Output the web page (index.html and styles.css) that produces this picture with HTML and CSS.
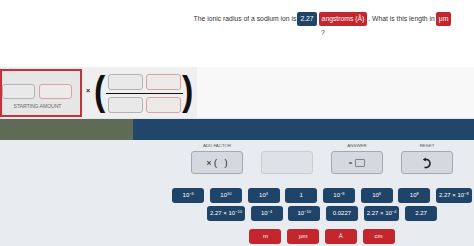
FILE: index.html
```html
<!DOCTYPE html>
<html>
<head>
<meta charset="utf-8">
<link rel="stylesheet" href="styles.css">
</head>
<body>
<div class="question">
  <div class="q-line">The ionic radius of a sodium ion is<span class="badge blue">2.27</span><span class="badge red">angstroms (Å)</span>. What is this length in<span class="badge red">μm</span></div>
  <div class="q-line">?</div>
</div>

<div class="workspace">
  <div class="factors">
    <div class="start">
      <div class="pair">
        <div class="slot num"></div>
        <div class="slot unit"></div>
      </div>
      <div class="start-label">STARTING AMOUNT</div>
    </div>
    <div class="times">×</div>
    <div class="paren open">(</div>
    <div class="fraction">
      <div class="frow">
        <div class="slot num"></div>
        <div class="slot unit"></div>
      </div>
      <div class="fline"></div>
      <div class="frow">
        <div class="slot num"></div>
        <div class="slot unit"></div>
      </div>
    </div>
    <div class="paren close">)</div>
  </div>
  <div class="filler"></div>
</div>

<div class="bar">
  <div class="bar-left"></div>
  <div class="bar-right"></div>
</div>

<div class="panel">
  <div class="controls">
    <div class="actions">
      <div class="action">
        <div class="alabel">ADD FACTOR</div>
        <div class="abtn"><span class="af">× (&nbsp;&nbsp;&nbsp;)</span></div>
      </div>
      <div class="action">
        <div class="alabel"></div>
        <div class="abtn disabled"></div>
      </div>
      <div class="action">
        <div class="alabel">ANSWER</div>
        <div class="abtn"><span class="eq">=</span><span class="ansbox"></span></div>
      </div>
      <div class="action">
        <div class="alabel">RESET</div>
        <div class="abtn">
          <svg class="reset" width="10" height="12" viewBox="0 0 10 12">
            <path d="M3 2.5 H5.2 A3.6 3.6 0 1 1 2.6 10.2" fill="none" stroke="#1a1a1a" stroke-width="1.6"/>
            <path d="M0.8 2.5 L3.8 0.4 L3.8 4.6 Z" fill="#1a1a1a"/>
          </svg>
        </div>
      </div>
    </div>

    <div class="pad">
      <div class="prow">
        <div class="nbtn">10<sup>−6</sup></div>
        <div class="nbtn">10<sup>10</sup></div>
        <div class="nbtn">10<sup>4</sup></div>
        <div class="nbtn">1</div>
        <div class="nbtn">10<sup>−8</sup></div>
        <div class="nbtn">10<sup>6</sup></div>
        <div class="nbtn">10<sup>8</sup></div>
        <div class="nbtn">2.27 × 10<sup>−8</sup></div>
      </div>
      <div class="prow">
        <div class="nbtn">2.27 × 10<sup>−10</sup></div>
        <div class="nbtn">10<sup>−4</sup></div>
        <div class="nbtn">10<sup>−10</sup></div>
        <div class="nbtn">0.0227</div>
        <div class="nbtn">2.27 × 10<sup>−4</sup></div>
        <div class="nbtn">2.27</div>
      </div>
      <div class="prow units">
        <div class="nbtn ubtn">m</div>
        <div class="nbtn ubtn">μm</div>
        <div class="nbtn ubtn">Å</div>
        <div class="nbtn ubtn">cm</div>
      </div>
    </div>
  </div>
</div>
</body>
</html>
```

FILE: styles.css
```css
* { box-sizing: border-box; }
html, body { margin: 0; padding: 0; }
body {
  width: 474px;
  height: 246px;
  overflow: hidden;
  background: #ffffff;
  font-family: "Liberation Sans", Arial, sans-serif;
  color: #333333;
}

.question {
  height: 67px;
  padding-top: 12px;
  padding-left: 172px;
  text-align: center;
  font-size: 6.8px;
}
.q-line {
  line-height: 14px;
  white-space: nowrap;
}
.badge {
  display: inline-block;
  height: 14px;
  line-height: 14px;
  padding: 0 3px;
  margin: 0 1px;
  border-radius: 2px;
  color: #ffffff;
  vertical-align: top;
  font-size: 6.8px;
}
.blue { background: #1f4468; }
.red { background: #c4262d; }

.workspace {
  display: flex;
  height: 51px;
}
.factors {
  width: 197px;
  background: #efefef;
  display: flex;
  align-items: flex-start;
}
.filler {
  flex: 1;
  background: #f8f8f8;
}
.start {
  margin-top: 2px;
  width: 82px;
  height: 48px;
  border: 2px solid #c9303a;
  background: #e6e6e6;
  padding-top: 13px;
  display: flex;
  flex-direction: column;
  align-items: flex-start;
}
.pair {
  width: 71px;
  display: flex;
  gap: 4px;
}
.pair .slot { width: 33px; height: 15px; }
.start-label {
  width: 71px;
  text-align: center;
  margin-top: 4px;
  font-size: 5.2px;
  color: #666666;
  letter-spacing: -0.1px;
}
.slot {
  border-radius: 3px;
}
.slot.num {
  border: 1px solid #b3b3b3;
  background: #e9e9e9;
}
.slot.unit {
  border: 1px solid #d8a3a6;
  background: #eeeaea;
}
.times {
  margin-left: 4px;
  margin-top: 20px;
  font-size: 7px;
  font-weight: bold;
  color: #222222;
  line-height: 8px;
}
.paren {
  font-size: 40px;
  font-weight: bold;
  line-height: 40px;
  margin-top: 4px;
  color: #111111;
  transform: scaleX(0.85);
}
.paren.open { margin-left: 3px; }
.paren.close { margin-left: -2px; }
.fraction {
  margin-top: 7px;
  width: 77px;
  display: flex;
  flex-direction: column;
  align-items: center;
}
.frow {
  display: flex;
  gap: 3px;
}
.frow .slot { width: 35px; height: 15.5px; }
.fline {
  width: 77px;
  height: 1.5px;
  background: #111111;
  margin: 3px 0 3px;
}

.bar {
  display: flex;
  height: 22px;
  border-top: 1px solid #dfe6ec;
}
.bar-left { width: 133px; background: #5f6b56; }
.bar-right { flex: 1; background: #22456a; }

.panel {
  background: #e8ecf0;
  height: 107px;
}
.controls {
  margin-left: 170px;
  width: 304px;
  padding-top: 1px;
}
.actions {
  display: flex;
  justify-content: center;
  gap: 18px;
}
.action {
  display: flex;
  flex-direction: column;
  align-items: center;
}
.alabel {
  height: 10px;
  line-height: 10px;
  font-size: 4.4px;
  color: #555555;
}
.abtn {
  width: 52px;
  height: 23px;
  border: 1px solid #a2abb4;
  border-radius: 3px;
  background: #d3d9df;
  display: flex;
  align-items: center;
  justify-content: center;
  color: #1a1a1a;
}
.abtn.disabled {
  background: #dde2e7;
  border-color: #c9cfd5;
}
.af {
  font-size: 9px;
  white-space: nowrap;
}
.eq {
  font-size: 6px;
  margin-right: 3px;
}
.ansbox {
  width: 10px;
  height: 8px;
  border: 1px solid #7a828a;
  border-radius: 1px;
}
.reset { display: block; margin-top: 1px; }

.pad {
  margin-top: 13.5px;
  display: flex;
  flex-direction: column;
  gap: 3px;
}
.prow {
  display: flex;
  justify-content: center;
  gap: 5.7px;
}
.prow.units { margin-top: 5px; }
.nbtn {
  min-width: 32px;
  height: 15px;
  padding: 0 3px;
  border-radius: 3px;
  background: #1f4468;
  color: #ffffff;
  font-size: 6px;
  line-height: 15px;
  text-align: center;
  white-space: nowrap;
}
.nbtn sup {
  font-size: 4px;
  line-height: 0;
  vertical-align: 2.5px;
}
.ubtn { background: #c4262d; }
```
